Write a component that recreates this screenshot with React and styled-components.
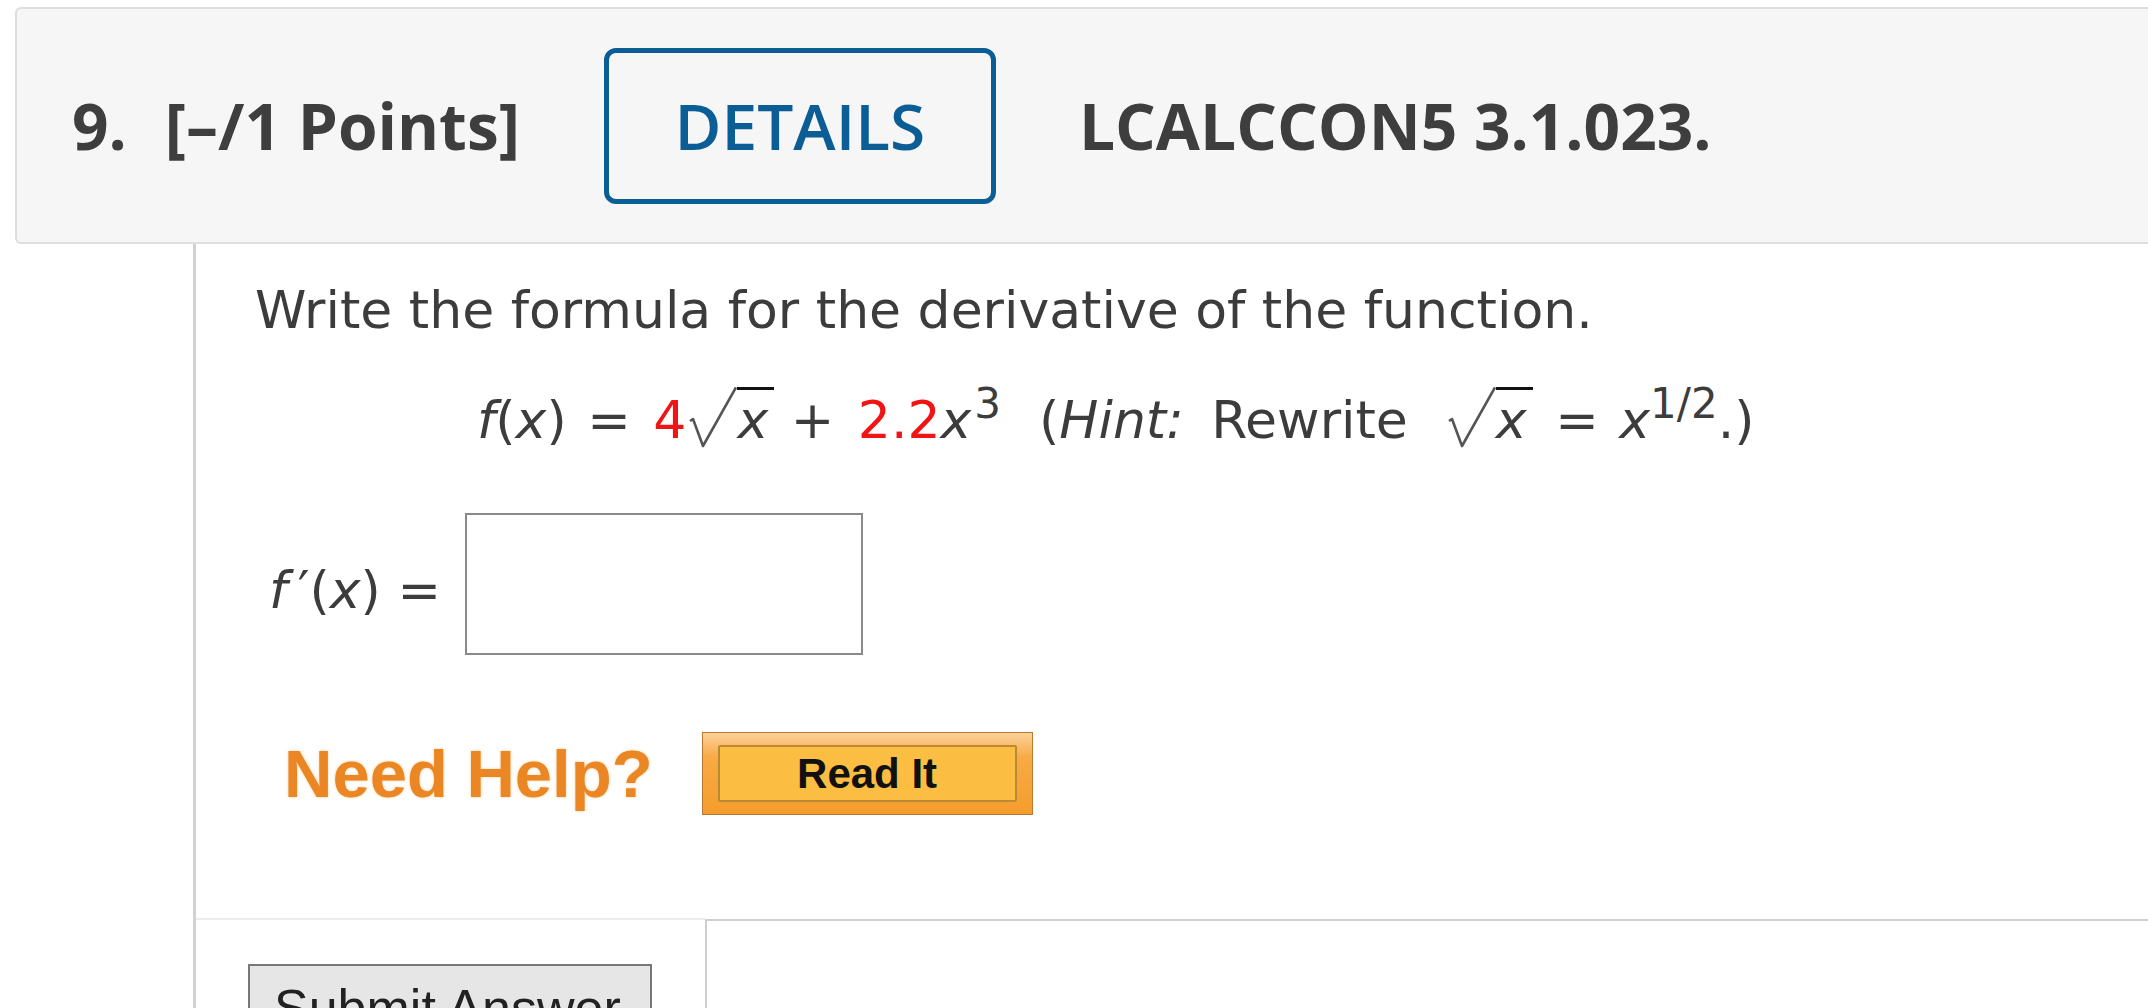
import React from 'react';
import styled, { createGlobalStyle } from 'styled-components';

const GlobalStyle = createGlobalStyle`
  html, body {
    margin: 0;
    padding: 0;
    background: #fff;
    overflow: hidden;
  }
`;

const Page = styled.div`
  height: 100vh;
  padding: 7px 0 0 15px;
  box-sizing: border-box;
  display: flex;
  flex-direction: column;
`;

const QuestionHeader = styled.header`
  flex-shrink: 0;
  height: 237px;
  box-sizing: border-box;
  display: flex;
  align-items: center;
  padding-left: 55px;
  background: #f6f6f6;
  border: 2px solid #dedede;
  border-right: none;
  border-radius: 6px 0 0 6px;
  font-family: 'Open Sans', 'Liberation Sans', sans-serif;
  font-weight: 700;
  font-size: 64px;
  line-height: 1;
  color: #3e3e3e;
`;

const Number = styled.span``;

const Points = styled.span`
  margin-left: 38px;
`;

const DetailsButton = styled.button`
  flex-shrink: 0;
  width: 392px;
  height: 156px;
  margin-left: 84px;
  box-sizing: border-box;
  border: 5px solid #0b5d96;
  border-radius: 12px;
  background: transparent;
  color: #0b5d96;
  font-family: 'Open Sans', 'Liberation Sans', sans-serif;
  font-weight: 600;
  font-size: 64px;
  line-height: 1;
  padding: 0;
`;

const CourseCode = styled.span`
  margin-left: 83px;
  white-space: nowrap;
`;

const QuestionBody = styled.section`
  flex: 1;
  margin-left: 178px;
  border-left: 3px solid #d2d2d2;
  display: flex;
  flex-direction: column;
`;

const Prompt = styled.div`
  padding: 36px 0 0 59px;
  font-family: 'DejaVu Sans', Verdana, sans-serif;
  font-size: 52px;
  line-height: 60px;
  color: #3c3c3c;
`;

const Formula = styled.div`
  margin-top: 46px;
  padding-left: 222px;
  white-space: nowrap;
`;

const Var = styled.i`
  font-style: italic;
`;

const Gap = styled.span`
  margin-left: ${({ gap }) => gap || 0}px;
`;

const Red = styled(Gap)`
  color: #f01414;
`;

const Sup = styled(Gap)`
  font-size: 42px;
  line-height: 0;
  vertical-align: 20px;
`;

const RootWrap = styled(Gap)`
  white-space: nowrap;
`;

const RadicalSign = styled.svg`
  width: 48px;
  height: 62px;
  vertical-align: -10px;
`;

const Overbar = styled.span`
  border-top: 3px solid #111;
  padding-right: 6px;
`;

const Root = ({ gap, children }) => (
  <RootWrap gap={gap}>
    <RadicalSign viewBox="0 0 48 62">
      <polyline
        points="1,35 4,33 14,60 47,1.5"
        fill="none"
        stroke="#555"
        strokeWidth="2.6"
        strokeLinejoin="round"
      />
    </RadicalSign>
    <Overbar>{children}</Overbar>
  </RootWrap>
);

const AnswerRow = styled.div`
  margin-top: 63px;
  padding-left: 14px;
  display: flex;
  align-items: center;
`;

const Label = styled.span`
  padding-top: 12px;
  margin-right: 24px;
`;

const AnswerInput = styled.input`
  width: 398px;
  height: 142px;
  box-sizing: border-box;
  border: 2px solid #8a8a8a;
  background: #fff;
  margin: 0;
`;

const HelpRow = styled.div`
  margin-top: 77px;
  padding-left: 29px;
  display: flex;
  align-items: center;
`;

const HelpLabel = styled.span`
  font-family: 'Liberation Sans', Arial, sans-serif;
  font-weight: 700;
  font-size: 67px;
  line-height: 75px;
  color: #ea8624;
  text-shadow: 0 0 3px rgba(250, 170, 80, 0.6);
`;

const ReadItButton = styled.button`
  margin-left: 49px;
  width: 331px;
  height: 83px;
  box-sizing: border-box;
  padding: 12px 15px;
  border: 1px solid #b9782f;
  background: linear-gradient(#fbd29a 0%, #f8aa45 30%, #f59d2c 100%);
  display: flex;
`;

const ReadItInner = styled.span`
  flex: 1;
  display: flex;
  align-items: center;
  justify-content: center;
  border: 2px solid #b98a35;
  border-radius: 2px;
  background: #fbbd42;
  font-family: 'Liberation Sans', Arial, sans-serif;
  font-weight: 700;
  font-size: 42px;
  color: #111;
`;

const Footer = styled.div`
  margin-top: 103px;
  flex: 1;
  display: grid;
  grid-template-columns: 509px 1fr;
`;

const SubmitCell = styled.div`
  border-top: 2px solid #ececec;
  padding: 44px 0 0 52px;
`;

const SidePanel = styled.div`
  border-top: 2px solid #cfcfcf;
  border-left: 2px solid #cfcfcf;
  margin-top: 1px;
`;

const SubmitButton = styled.button`
  width: 404px;
  height: 80px;
  box-sizing: border-box;
  border: 2px solid #777;
  background: #e6e6e6;
  color: #222;
  font-family: 'Liberation Sans', Arial, sans-serif;
  font-size: 52px;
  line-height: 1;
  padding: 16px 0 0 24px;
  text-align: left;
  display: flex;
  align-items: flex-start;
`;

const App = () => (
  <>
    <GlobalStyle />
    <Page>
      <QuestionHeader>
        <Number>9.</Number>
        <Points>[–/1 Points]</Points>
        <DetailsButton>DETAILS</DetailsButton>
        <CourseCode>LCALCCON5 3.1.023.</CourseCode>
      </QuestionHeader>
      <QuestionBody>
        <Prompt>
          <div>Write the formula for the derivative of the function.</div>
          <Formula>
            <Var>f</Var>(<Var>x</Var>)<Gap gap={4}> = </Gap>
            <Red gap={6}>4</Red>
            <Root gap={3}>
              <Var>x</Var>
            </Root>{' '}
            + <Red gap={7}>2.2</Red>
            <Var>x</Var>
            <Sup gap={3}>3</Sup>
            <Gap gap={38}>(</Gap>
            <Var>Hint:</Var> <Gap gap={11}>Rewrite</Gap>
            <Root gap={40}>
              <Var>x</Var>
            </Root>
            <Gap gap={6}> = </Gap>
            <Gap gap={4}>
              <Var>x</Var>
            </Gap>
            <Sup>1/2</Sup>.)
          </Formula>
          <AnswerRow>
            <Label>
              <Var>f</Var>&thinsp;′(<Var>x</Var>) =
            </Label>
            <AnswerInput type="text" />
          </AnswerRow>
          <HelpRow>
            <HelpLabel>Need Help?</HelpLabel>
            <ReadItButton>
              <ReadItInner>Read It</ReadItInner>
            </ReadItButton>
          </HelpRow>
        </Prompt>
        <Footer>
          <SubmitCell>
            <SubmitButton>Submit Answer</SubmitButton>
          </SubmitCell>
          <SidePanel />
        </Footer>
      </QuestionBody>
    </Page>
  </>
);

export default App;
